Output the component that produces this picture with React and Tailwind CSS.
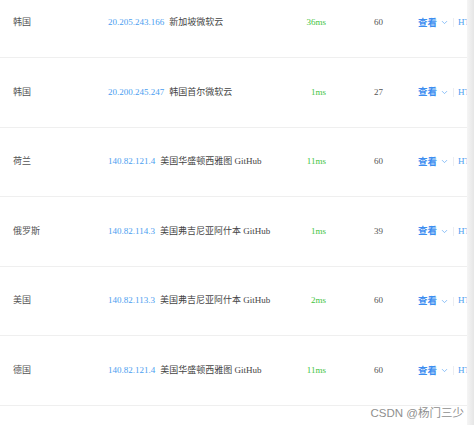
import { ChevronDown } from 'lucide-react';

const rows = [
  { country: '韩国', ip: '20.205.243.166', place: '新加坡微软云', ms: '36ms', count: 60 },
  { country: '韩国', ip: '20.200.245.247', place: '韩国首尔微软云', ms: '1ms', count: 27 },
  { country: '荷兰', ip: '140.82.121.4', place: '美国华盛顿西雅图 GitHub', ms: '11ms', count: 60 },
  { country: '俄罗斯', ip: '140.82.114.3', place: '美国弗吉尼亚阿什本 GitHub', ms: '1ms', count: 39 },
  { country: '美国', ip: '140.82.113.3', place: '美国弗吉尼亚阿什本 GitHub', ms: '2ms', count: 60 },
  { country: '德国', ip: '140.82.121.4', place: '美国华盛顿西雅图 GitHub', ms: '11ms', count: 60 },
];

const App = () => {
  return (
    <div
      className="relative w-[474px] h-[425px] overflow-hidden bg-white text-[9px] text-[#555]"
      style={{ fontFamily: '"Liberation Serif", "Noto Sans CJK SC", serif' }}
    >
      {/* table rows */}
      <div className="-mt-[11.6px]">
        {rows.map((r, i) => (
          <div key={i} className="flex items-center h-[69.6px] border-b border-[#efefef] whitespace-nowrap">
            <div className="w-[108px] shrink-0 pl-[13px] text-[#555]">{r.country}</div>
            <div className="w-[190px] shrink-0 flex items-center gap-[5px]">
              <span className="text-[#4a9ef0]">{r.ip}</span>
              <span className="text-[#444]">{r.place}</span>
            </div>
            <div className="w-[28px] shrink-0 text-right text-[#3fc43f]">{r.ms}</div>
            <div className="w-[92px] shrink-0 pl-[48px] text-[#555]">{r.count}</div>
            <div className="flex items-center shrink-0 text-[#3d8ef0]">
              <span className="text-[9.5px] font-semibold">查看</span>
              <ChevronDown className="ml-[3px] w-[9px] h-[9px] text-[#6aaef5]" strokeWidth={2} />
              <span className="ml-[4px] w-px h-[9px] bg-[#eceef2]" />
              <span className="ml-[4px] text-[#4a9ef0]">HTTPS</span>
            </div>
          </div>
        ))}
      </div>

      {/* fixed column shadow on the right */}
      <div className="absolute top-0 right-0 h-full w-[7px] bg-gradient-to-r from-[#f5f5f5] to-[#e6e6e6]" />

      {/* watermark */}
      <div
        className="absolute right-[10px] bottom-[3px] text-[11.5px] text-[#8f8f8f]"
        style={{ fontFamily: '"Liberation Sans", "Noto Sans CJK SC", sans-serif' }}
      >
        CSDN @杨门三少
      </div>
    </div>
  );
};

export default App;
